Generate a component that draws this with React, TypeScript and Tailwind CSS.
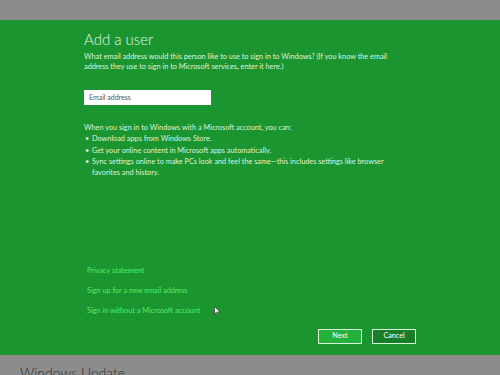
import React from "react";

const bullets = [
  "Download apps from Windows Store.",
  "Get your online content in Microsoft apps automatically.",
  "Sync settings online to make PCs look and feel the same\u2014this includes settings like browser favorites and history.",
];

export default function App() {
  return (
    <div
      className="w-[500px] h-[375px] overflow-hidden flex flex-col bg-[#8c8c8c]"
      style={{ fontFamily: 'Lato, "Open Sans", sans-serif' }}
    >
      <div className="h-[20px] shrink-0" />

      {/* Green dialog band */}
      <div className="relative h-[335px] shrink-0 bg-[#1b952f] flex flex-col pl-[84px] pr-[84px]">
        <h1 className="mt-[9px] text-[15px] leading-[20px] font-light text-[#e6f5e6]">Add a user</h1>
        <p className="mt-[3px] w-[322px] text-[7.3px] leading-[10px] text-[#dff3df]">
          What email address would this person like to use to sign in to Windows? (If you know the email
          address they use to sign in to Microsoft services, enter it here.)
        </p>

        <div className="mt-[18px] w-[127px] h-[15px] bg-white flex items-center pl-[5px] text-[7px] text-[#555]">
          Email address
        </div>

        <p className="mt-[18px] text-[7.3px] leading-[10px] text-[#dff3df]">
          When you sign in to Windows with a Microsoft account, you can:
        </p>
        <ul className="mt-[1px] w-[316px] flex flex-col gap-[1px] text-[7.3px] leading-[10.5px] text-[#dff3df]">
          {bullets.map((b) => (
            <li key={b} className="flex">
              <span className="w-[8px] shrink-0 pl-[1px]">•</span>
              <span>{b}</span>
            </li>
          ))}
        </ul>

        <div className="mt-[88px] flex flex-col gap-[10px] pl-[3px] text-[7.3px] leading-[10px] text-[#55ea6c]">
          <span>Privacy statement</span>
          <span>Sign up for a new email address</span>
          <span>Sign in without a Microsoft account</span>
        </div>

        <div className="mt-[13px] flex justify-end gap-[10px] w-[332px]">
          <button className="w-[44px] h-[15px] border border-[#d8f3d8] bg-[#23b33c] text-[7.2px] text-white flex items-center justify-center">
            Next
          </button>
          <button className="w-[44px] h-[15px] border border-[#d8f3d8] bg-[#177d29] text-[7.2px] text-white flex items-center justify-center">
            Cancel
          </button>
        </div>

        {/* mouse cursor */}
        <svg className="absolute left-[214px] top-[286px]" width="7" height="10" viewBox="0 0 7 10">
          <path d="M0.5 0.5 L0.5 8 L2.3 6.3 L3.6 9.2 L4.7 8.7 L3.5 5.9 L6 5.9 Z" fill="#fff" stroke="#333" strokeWidth="0.7" />
        </svg>
      </div>

      {/* gray band with underlying window title */}
      <div className="flex-1 pl-[20px] pt-[10px] text-[14px] leading-[16px] text-[#2e2e2e] font-light">
        Windows Update
      </div>
    </div>
  );
}
